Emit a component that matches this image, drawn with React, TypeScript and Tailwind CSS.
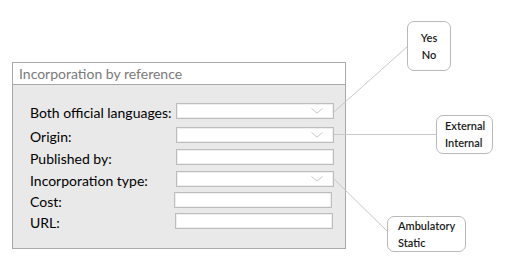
import React from "react";

const rows = [
  { label: "Both official languages:", select: true, mt: "mt-0", ml: "ml-0" },
  { label: "Origin:", select: true, mt: "mt-[8px]", ml: "ml-0" },
  { label: "Published by:", select: false, mt: "mt-[6px]", ml: "ml-0" },
  { label: "Incorporation type:", select: true, mt: "mt-[6px]", ml: "ml-0" },
  { label: "Cost:", select: false, mt: "mt-[5px]", ml: "-ml-[2px]" },
  { label: "URL:", select: false, mt: "mt-[5px]", ml: "-ml-[1px]" },
];

const Chevron = () => (
  <svg width="12" height="6" viewBox="0 0 12 6" className="absolute right-[10px] top-[4px]">
    <path d="M0.5 0.5 L6 5 L11.5 0.5" fill="none" stroke="#c8c8c8" strokeWidth="1" />
  </svg>
);

const Callout = ({ className, items }: { className: string; items: string[] }) => (
  <div
    className={`absolute flex flex-col justify-center gap-[3px] rounded-[7px] border border-[#b9b9b9] bg-white text-[11px] font-semibold leading-[14px] text-[#1a1a1a] ${className}`}
  >
    {items.map((t) => (
      <span key={t}>{t}</span>
    ))}
  </div>
);

export default function App() {
  return (
    <div
      className="relative h-[261px] w-[506px] overflow-hidden bg-white"
      style={{ fontFamily: "Lato, 'Open Sans', sans-serif" }}
    >
      <div className="ml-[12px] pt-[62px]">
        <div className="h-[187px] w-[334px] border border-[#a9a9a9] bg-[#e9e9e9]">
          <div className="flex h-[22px] items-center border-b border-[#a9a9a9] bg-white pl-[6px] text-[14px] text-[#7a7a7a]">
            Incorporation by reference
          </div>
          <div className="flex flex-col pl-[17px] pt-[18px]">
            {rows.map((r) => (
              <div key={r.label} className={`flex h-[16px] items-center ${r.mt}`}>
                <span className="w-[146px] whitespace-nowrap pt-[3px] text-[14px] leading-[16px] text-black">
                  {r.label}
                </span>
                <div
                  className={`relative h-[16px] w-[158px] border border-[#bdbdbd] bg-white shadow-[inset_0_0_0_1px_#efefef] ${r.ml}`}
                >
                  {r.select && <Chevron />}
                </div>
              </div>
            ))}
          </div>
        </div>
      </div>

      <svg className="pointer-events-none absolute left-0 top-0" width="506" height="261">
        <line x1="334" y1="112" x2="408" y2="46" stroke="#c9c9c9" strokeWidth="1" />
        <line x1="334" y1="134.5" x2="437" y2="134.5" stroke="#c9c9c9" strokeWidth="1" />
        <line x1="334" y1="179" x2="388" y2="232" stroke="#c9c9c9" strokeWidth="1" />
      </svg>

      <Callout className="left-[407px] top-[21px] h-[50px] w-[44px] items-center" items={["Yes", "No"]} />
      <Callout className="left-[436px] top-[115px] h-[39px] w-[57px] items-start pl-[8px]" items={["External", "Internal"]} />
      <Callout className="left-[387px] top-[216px] h-[36px] w-[79px] items-start gap-[0px] pl-[10px]" items={["Ambulatory", "Static"]} />
    </div>
  );
}
